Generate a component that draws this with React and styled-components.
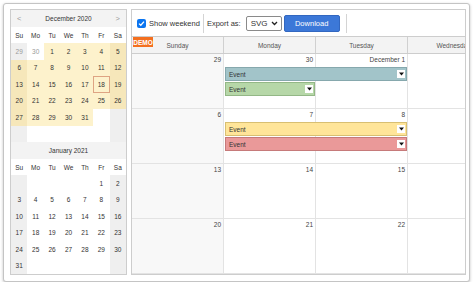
import React from 'react';
import styled, { createGlobalStyle } from 'styled-components';

const GlobalStyle = createGlobalStyle`
  html, body {
    margin: 0;
    padding: 0;
    background: #fff;
  }
  body {
    font-family: "Liberation Sans", Arial, sans-serif;
    color: #333;
  }
`;

const Frame = styled.div`
  box-sizing: border-box;
  width: 467px;
  height: 279px;
  margin: 3px 0 0 3px;
  padding: 5px 3px 6px 6px;
  border: 1px solid #c4c4c4;
  border-radius: 3px;
  box-shadow: 0 1px 3px rgba(0, 0, 0, 0.25);
  display: flex;
  gap: 4px;
  background: #fff;
`;

/* ---------- navigator ---------- */

const Nav = styled.div`
  box-sizing: border-box;
  width: 117px;
  border: 1px solid #cdcdcd;
  display: flex;
  flex-direction: column;
  font-size: 6.5px;
`;

const MonthHead = styled.div`
  height: 17px;
  background: #f3f3f3;
  display: grid;
  grid-template-columns: repeat(7, 1fr);
  align-items: center;
  text-align: center;
  color: #333;
`;

const Arrow = styled.span`
  color: #999;
  font-size: 7.5px;
`;

const MonthTitle = styled.span`
  grid-column: 2 / 7;
`;

const DayNames = styled.div`
  height: 16px;
  display: grid;
  grid-template-columns: repeat(7, 1fr);
  align-items: center;
  text-align: center;
  color: #333;
`;

const Days = styled.div`
  display: grid;
  grid-template-columns: repeat(7, 1fr);
  grid-auto-rows: 16.5px;
`;

const dayBg = ({ $weekend, $busy }) => {
  if ($busy) return $weekend ? '#f6e7ba' : '#fdf2cc';
  return $weekend ? '#efefef' : '#fff';
};

const Day = styled.div`
  box-sizing: border-box;
  display: flex;
  align-items: center;
  justify-content: center;
  background: ${dayBg};
  color: ${(p) => (p.$other ? '#9a9a9a' : '#333')};
  border: ${(p) => (p.$selected ? '1px solid #dea483' : 'none')};
`;

/* ---------- main ---------- */

const Main = styled.div`
  flex: 1;
  min-width: 0;
  border: 1px solid #cdcdcd;
  display: flex;
  flex-direction: column;
  overflow: hidden;
`;

const Toolbar = styled.div`
  height: 26px;
  display: flex;
  align-items: center;
  padding-left: 5px;
  font-size: 7.5px;
  color: #333;
`;

const Check = styled.span`
  width: 9px;
  height: 9px;
  border-radius: 2px;
  background: #0b75f0;
  display: flex;
  align-items: center;
  justify-content: center;
`;

const Label = styled.span`
  margin-left: ${(p) => p.$gap || 0}px;
`;

const Sep = styled.span`
  width: 1px;
  height: 19px;
  background: #d4d4d4;
  margin: 0 ${(p) => p.$right || 3}px 0 ${(p) => p.$left || 3}px;
`;

const Select = styled.div`
  box-sizing: border-box;
  width: 36px;
  height: 15px;
  margin-left: 5px;
  border: 1px solid #8a8a8a;
  border-radius: 2px;
  padding: 0 3px 0 4px;
  display: flex;
  align-items: center;
  justify-content: space-between;
  font-size: 8px;
`;

const Button = styled.div`
  box-sizing: border-box;
  width: 56px;
  height: 17px;
  margin-left: 2px;
  background: #3c78d8;
  border: 1px solid #3267c0;
  border-radius: 2px;
  color: #fff;
  display: flex;
  align-items: center;
  justify-content: center;
  font-size: 7.5px;
`;

const Calendar = styled.div`
  position: relative;
  flex: 1;
  border-top: 1px solid #cdcdcd;
  overflow: hidden;
  font-size: 6.5px;
`;

const HeaderRow = styled.div`
  display: grid;
  grid-template-columns: repeat(4, 92px);
  height: 16px;
  background: #f3f3f3;
  border-bottom: 1px solid #cdcdcd;
`;

const HeaderCell = styled.div`
  box-sizing: border-box;
  border-right: 1px solid #d0d0d0;
  display: flex;
  align-items: center;
  justify-content: center;
  white-space: nowrap;
  overflow: hidden;
  color: #555;
`;

const Demo = styled.span`
  position: absolute;
  top: 0;
  left: 1px;
  width: 20px;
  height: 10px;
  background: #f36f1f;
  color: #fff;
  font-weight: bold;
  font-size: 6.5px;
  display: flex;
  align-items: center;
  justify-content: center;
`;

const WeekRow = styled.div`
  box-sizing: border-box;
  display: grid;
  grid-template-columns: repeat(4, 92px);
  grid-template-rows: 13px 15px 15px 1fr;
  height: 55px;
  border-bottom: 1px solid #e3e3e3;
`;

const Cell = styled.div`
  grid-row: 1 / -1;
  grid-column: ${(p) => p.$col};
  border-right: 1px solid #e3e3e3;
  background: ${(p) => (p.$weekend ? '#f8f8f8' : '#fff')};
  text-align: right;
  padding: 2px 2px 0 0;
  line-height: 8px;
  color: #444;
`;

const Event = styled.div`
  box-sizing: border-box;
  grid-row: ${(p) => p.$row};
  grid-column: ${(p) => p.$col} / span ${(p) => p.$span};
  height: 14px;
  margin: 0 1px 1px 1px;
  background: ${(p) => p.$bg};
  border: 1px solid ${(p) => p.$line};
  display: flex;
  align-items: center;
  justify-content: space-between;
  padding: 0 1px 0 3px;
  color: #333;
  z-index: 1;
`;

const Menu = styled.span`
  width: 8px;
  height: 8px;
  background: #fff;
  display: flex;
  align-items: center;
  justify-content: center;
`;

const names = ['Su', 'Mo', 'Tu', 'We', 'Th', 'Fr', 'Sa'];
const fullNames = ['Sunday', 'Monday', 'Tuesday', 'Wednesday'];

function buildDecember() {
  const cells = [
    { n: 29, other: true },
    { n: 30, other: true },
  ];
  for (let i = 1; i <= 31; i++) cells.push({ n: i, busy: true, selected: i === 18 });
  while (cells.length < 42) cells.push({});
  return cells;
}

function buildJanuary() {
  const cells = [{}, {}, {}, {}, {}];
  for (let i = 1; i <= 31; i++) cells.push({ n: i });
  while (cells.length < 42) cells.push({});
  return cells;
}

function Month({ title, cells, arrows }) {
  return (
    <>
      <MonthHead>
        <Arrow>{arrows ? '<' : ''}</Arrow>
        <MonthTitle>{title}</MonthTitle>
        <Arrow>{arrows ? '>' : ''}</Arrow>
      </MonthHead>
      <DayNames>
        {names.map((d) => <span key={d}>{d}</span>)}
      </DayNames>
      <Days>
        {cells.map((c, i) => (
          <Day
            key={i}
            $weekend={i % 7 === 0 || i % 7 === 6}
            $busy={c.busy}
            $other={c.other}
            $selected={c.selected}
          >
            {c.n}
          </Day>
        ))}
      </Days>
    </>
  );
}

const colors = {
  teal: ['#a2c4c9', '#86a8ad'],
  green: ['#b6d7a8', '#93b786'],
  yellow: ['#ffe599', '#d8bf72'],
  red: ['#ea9999', '#c67a7a'],
};

const weeks = [
  {
    days: [29, 30, 'December 1', 2],
    events: [
      { row: 2, col: 2, span: 2, c: 'teal' },
      { row: 3, col: 2, span: 1, c: 'green' },
    ],
  },
  {
    days: [6, 7, 8, 9],
    events: [
      { row: 2, col: 2, span: 2, c: 'yellow' },
      { row: 3, col: 2, span: 2, c: 'red' },
    ],
  },
  { days: [13, 14, 15, 16], events: [] },
  { days: [20, 21, 22, 23], events: [] },
];

function MenuArrow() {
  return (
    <Menu>
      <svg width="5" height="4" viewBox="0 0 5 4">
        <path d="M0 0.5 L5 0.5 L2.5 3.5 Z" fill="#111" />
      </svg>
    </Menu>
  );
}

export default function App() {
  return (
    <>
      <GlobalStyle />
      <Frame>
        <Nav>
          <Month title="December 2020" cells={buildDecember()} arrows />
          <Month title="January 2021" cells={buildJanuary()} />
        </Nav>
        <Main>
          <Toolbar>
            <Check>
              <svg width="7" height="7" viewBox="0 0 7 7">
                <path d="M1 3.6 L2.8 5.3 L6 1.6" stroke="#fff" strokeWidth="1.3" fill="none" />
              </svg>
            </Check>
            <Label $gap={3}>Show weekend</Label>
            <Sep $left={3} $right={3} />
            <Label>Export as:</Label>
            <Select>
              <span>SVG</span>
              <svg width="7" height="5" viewBox="0 0 7 5">
                <path d="M1 1 L3.5 3.5 L6 1" stroke="#222" strokeWidth="1.3" fill="none" />
              </svg>
            </Select>
            <Button>Download</Button>
            <Sep $left={6} />
          </Toolbar>
          <Calendar>
            <HeaderRow>
              {fullNames.map((d) => <HeaderCell key={d}>{d}</HeaderCell>)}
            </HeaderRow>
            <Demo>DEMO</Demo>
            {weeks.map((w, wi) => (
              <WeekRow key={wi}>
                {w.days.map((d, i) => (
                  <Cell key={i} $col={i + 1} $weekend={i === 0}>{d}</Cell>
                ))}
                {w.events.map((e, ei) => (
                  <Event
                    key={ei}
                    $row={e.row}
                    $col={e.col}
                    $span={e.span}
                    $bg={colors[e.c][0]}
                    $line={colors[e.c][1]}
                  >
                    <span>Event</span>
                    <MenuArrow />
                  </Event>
                ))}
              </WeekRow>
            ))}
          </Calendar>
        </Main>
      </Frame>
    </>
  );
}
